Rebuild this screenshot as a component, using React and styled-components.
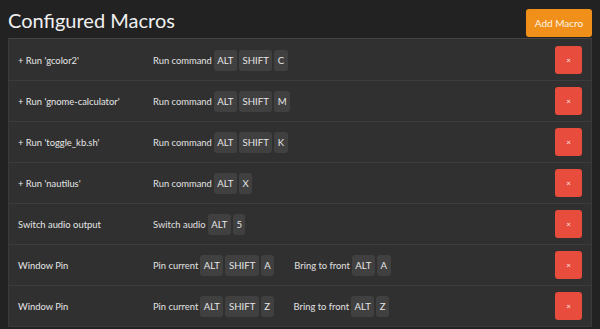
import React from "react";
import styled, { createGlobalStyle } from "styled-components";

const Global = createGlobalStyle`
  html, body { margin: 0; padding: 0; background: #222222; }
  body { font-family: Lato, "Open Sans", sans-serif; color: #dcdcdc; }
`;

const Page = styled.div`
  padding: 0 8px;
  width: 600px;
  box-sizing: border-box;
`;

const Header = styled.div`
  height: 38px;
  display: flex;
  align-items: flex-end;
  justify-content: space-between;
`;

const Title = styled.h1`
  margin: 0 0 6px 0;
  font-size: 20px;
  line-height: 24px;
  font-weight: 400;
  color: #f0f0f0;
`;

const AddButton = styled.button`
  width: 66px;
  height: 28px;
  margin-bottom: 1px;
  border: none;
  border-radius: 3px;
  background: #f0901a;
  color: #fff4e6;
  font-family: Lato, sans-serif;
  font-size: 10px;
  padding: 0;
`;

const Panel = styled.div`
  background: #303030;
  border: 1px solid #3a3a3a;
  border-top: 1px solid #444;
  padding-top: 1px;
`;

const Row = styled.div`
  height: 40px;
  display: flex;
  align-items: center;
  padding: 0 9px 0 9px;
  border-bottom: 1px solid #3c3c3c;
  &:last-child { border-bottom: none; }
`;

const Name = styled.div`
  width: 135px;
  font-size: 9.4px;
  color: #e6e6e6;
`;

const Actions = styled.div`
  flex: 1;
  display: flex;
  align-items: center;
  gap: 20px;
`;

const Action = styled.div`
  display: flex;
  align-items: center;
  gap: 2px;
  font-size: 9.4px;
  color: #e0e0e0;
`;

const Label = styled.span``;

const Key = styled.span`
  height: 21px;
  display: inline-flex;
  align-items: center;
  padding: 0 3.5px;
  background: #404040;
  border-radius: 3px;
  color: #e6e6e6;
  font-size: 9.6px;
`;

const Delete = styled.button`
  width: 27px;
  height: 28px;
  border: none;
  border-radius: 3px;
  background: #e74c3c;
  color: #ffe8e5;
  font-size: 8px;
  padding: 0;
  font-family: Lato, sans-serif;
`;

const macros = [
  { name: "+ Run 'gcolor2'", actions: [["Run command", ["ALT", "SHIFT", "C"]]] },
  { name: "+ Run 'gnome-calculator'", actions: [["Run command", ["ALT", "SHIFT", "M"]]] },
  { name: "+ Run 'toggle_kb.sh'", actions: [["Run command", ["ALT", "SHIFT", "K"]]] },
  { name: "+ Run 'nautilus'", actions: [["Run command", ["ALT", "X"]]] },
  { name: "Switch audio output", actions: [["Switch audio", ["ALT", "5"]]] },
  {
    name: "Window Pin",
    actions: [
      ["Pin current", ["ALT", "SHIFT", "A"]],
      ["Bring to front", ["ALT", "A"]],
    ],
  },
  {
    name: "Window Pin",
    actions: [
      ["Pin current", ["ALT", "SHIFT", "Z"]],
      ["Bring to front", ["ALT", "Z"]],
    ],
  },
];

export default function App() {
  return (
    <Page>
      <Global />
      <Header>
        <Title>Configured Macros</Title>
        <AddButton>Add Macro</AddButton>
      </Header>
      <Panel>
        {macros.map((m, i) => (
          <Row key={i}>
            <Name>{m.name}</Name>
            <Actions>
              {m.actions.map(([label, keys], j) => (
                <Action key={j}>
                  <Label>{label}</Label>
                  {keys.map((k, n) => (
                    <Key key={n}>{k}</Key>
                  ))}
                </Action>
              ))}
            </Actions>
            <Delete>×</Delete>
          </Row>
        ))}
      </Panel>
    </Page>
  );
}
